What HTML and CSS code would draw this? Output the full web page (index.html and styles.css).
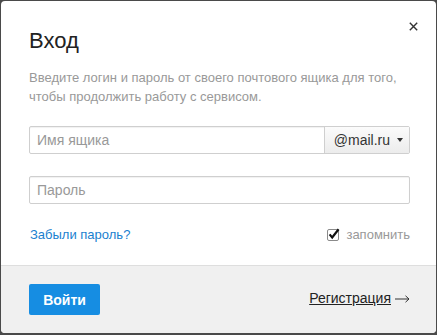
FILE: index.html
```html
<!DOCTYPE html>
<html lang="ru">
<head>
  <meta charset="UTF-8">
  <meta name="viewport" content="width=device-width, initial-scale=1.0">
  <title>Вход</title>
  <link rel="stylesheet" href="styles.css">
</head>
<body>
  <div class="dialog">
    <span class="close-btn">
      <svg width="9" height="9" viewBox="0 0 9 9">
        <path d="M0.8 0.8 L8.2 8.2 M8.2 0.8 L0.8 8.2" stroke="#333" stroke-width="1.4"/>
      </svg>
    </span>
    <div class="dialog-body">
      <h1>Вход</h1>
      <p class="hint">Введите логин и пароль от своего почтового ящика для того, чтобы продолжить работу с сервисом.</p>

      <div class="field login-field">
        <input type="text" placeholder="Имя ящика">
        <div class="domain">@mail.ru <span class="caret"></span></div>
      </div>
      <div class="field">
        <input type="password" placeholder="Пароль">
      </div>

      <div class="options">
        <a href="#" class="forgot">Забыли пароль?</a>
        <label class="remember">
          <svg class="check" width="14" height="14" viewBox="0 0 14 14">
            <rect x="0.5" y="1.5" width="11" height="11" rx="1.5" fill="#fff" stroke="#8a8a8a"/>
            <path d="M2.6 6.4 L5.2 9.4 L11.6 1.2" fill="none" stroke="#111" stroke-width="2.2"/>
          </svg>
          запомнить
        </label>
      </div>
    </div>

    <div class="dialog-footer">
      <button class="submit">Войти</button>
      <a href="#" class="register">
        <span>Регистрация</span>
        <svg class="arrow" width="15" height="8" viewBox="0 0 15 8">
          <path d="M0 4 H14 M10.5 0.8 L14 4 L10.5 7.2" fill="none" stroke="#333" stroke-width="1"/>
        </svg>
      </a>
    </div>
  </div>
</body>
</html>
```

FILE: styles.css
```css
body {
  margin: 0;
  padding: 1px;
  background-color: #4a4a4a; /* page dimmed behind the dialog */
  font-family: "Liberation Sans", Arial, sans-serif;
}
.dialog {
  position: relative;
  width: 435px;
  height: 332px;
  display: flex;
  flex-direction: column;
  background: #fff;
  border-radius: 4px;
  overflow: hidden;
}
.close-btn {
  position: absolute;
  top: 21px;
  right: 18px;
  line-height: 0;
  cursor: pointer;
}
.dialog-body {
  padding: 27px 26px 20px 28px;
}
h1 {
  margin: 0;
  font-size: 22px;
  line-height: 26px;
  font-weight: normal;
  color: #222;
}
.hint {
  margin: 14px 0 0;
  width: 380px;
  font-size: 13px;
  line-height: 19px;
  color: #999;
}
.field {
  display: flex;
  height: 28px;
  margin-top: 20px;
  border: 1px solid #cfcfcf;
  border-radius: 2px;
  box-sizing: border-box;
  box-shadow: inset 0 1px 1px rgba(0, 0, 0, 0.06);
}
.field + .field {
  margin-top: 22px;
}
.field input {
  flex: 1;
  min-width: 0;
  border: none;
  outline: none;
  padding: 0 7px;
  background: transparent;
  font-family: inherit;
  font-size: 14px;
  color: #333;
}
.field input::placeholder {
  color: #999;
}
.domain {
  display: flex;
  align-items: center;
  gap: 7px;
  padding: 0 6px 0 9px;
  border-left: 1px solid #cfcfcf;
  background: linear-gradient(#fbfbfb, #ececec);
  font-size: 14px;
  color: #333;
}
.caret {
  width: 0;
  height: 0;
  border-left: 3px solid transparent;
  border-right: 3px solid transparent;
  border-top: 4px solid #333;
}
.options {
  display: flex;
  justify-content: space-between;
  align-items: center;
  margin-top: 21px;
  line-height: 20px;
  font-size: 13px;
}
.forgot {
  color: #1a7fcf;
  text-decoration: none;
  margin-left: 1px;
}
.remember {
  display: flex;
  align-items: center;
  gap: 5px;
  color: #999;
}
.dialog-footer {
  flex: 1;
  display: flex;
  justify-content: space-between;
  align-items: flex-start;
  padding: 18px 26px 0 28px;
  background: #f0f0f0;
  border-top: 1px solid #dedede;
}
.submit {
  width: 71px;
  height: 31px;
  border: none;
  border-radius: 2px;
  background: #168de2;
  color: #fff;
  font-family: inherit;
  font-size: 14px;
  font-weight: bold;
  cursor: pointer;
}
.register {
  display: flex;
  align-items: center;
  gap: 4px;
  margin-top: 6px;
  font-size: 14px;
  color: #222;
  text-decoration: none;
}
.register span {
  text-decoration: underline;
}
.arrow {
  margin-top: 2px;
}
```
